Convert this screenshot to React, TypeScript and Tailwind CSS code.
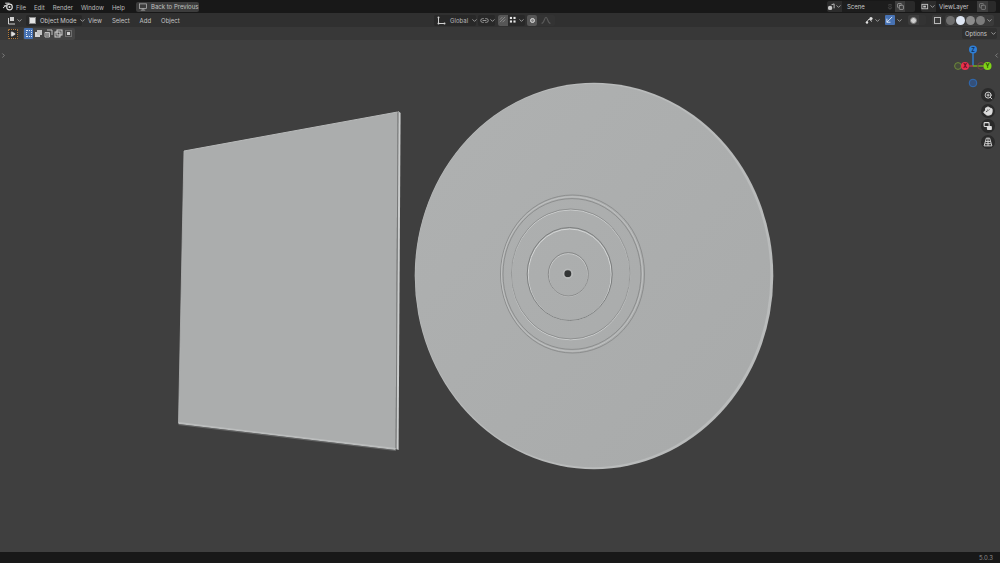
import { ChevronDown, ChevronLeft, ChevronRight, Hand, Link2, Copy, Pin, Play, ZoomIn } from "lucide-react";
import type { ReactNode } from "react";

const menus = ["File", "Edit", "Render", "Window", "Help"];
const editMenus = ["View", "Select", "Add", "Object"];

const BlenderLogo = () => (
  <svg width="12" height="11" viewBox="0 0 12 11" fill="none">
    <circle cx="7.5" cy="6" r="2.8" stroke="#dcdcdc" strokeWidth="1.2" />
    <circle cx="7.5" cy="6" r="1" fill="#dcdcdc" />
    <path d="M1 7 L5 3.6 M3.2 2.2 H7.5 M1.8 4.9 H4.8" stroke="#dcdcdc" strokeWidth="1" />
  </svg>
);

const Chevron = ({ color = "#bdbdbd" }: { color?: string }) => (
  <ChevronDown size={7} color={color} strokeWidth={2.5} className="shrink-0" />
);

const Glyph = ({ children, size = 9 }: { children: ReactNode; size?: number }) => (
  <svg width={size} height={size} viewBox="0 0 9 9" fill="none" className="shrink-0">
    {children}
  </svg>
);

const SelectModes = () => (
  <div className="flex items-center h-[12px] w-[52px] bg-[#454545] rounded-[2px] gap-[1px] ml-[5px] pl-[1px]">
    <div className="w-[9px] h-[11px] bg-[#4772b3] rounded-[1px] flex items-center justify-center">
      <div className="w-[6px] h-[7px] border border-dotted border-[#dfe8f5]" />
    </div>
    <Glyph>
      <rect x="1" y="3" width="5" height="5" fill="#d4d4d4" />
      <rect x="3" y="1" width="5" height="5" fill="#c4c4c4" />
    </Glyph>
    <Glyph>
      <path d="M3 1 H8 V6 M1 3.5 H5.5 V8 H1 Z" stroke="#cfcfcf" strokeWidth="0.9" />
      <rect x="1.5" y="4" width="3.5" height="3.5" fill="#8c8c8c" />
    </Glyph>
    <Glyph>
      <rect x="1" y="3" width="5" height="5" stroke="#d4d4d4" />
      <rect x="3" y="1" width="5" height="5" stroke="#d4d4d4" />
    </Glyph>
    <Glyph>
      <rect x="1.5" y="1.5" width="6" height="6" stroke="#9a9a9a" strokeDasharray="1 1" />
      <rect x="3" y="3" width="3" height="3" fill="#cfcfcf" />
    </Glyph>
  </div>
);

const NavButton = ({ children }: { children: ReactNode }) => (
  <div className="w-[14px] h-[14px] rounded-full bg-[#2a2a2a] flex items-center justify-center text-[#dcdcdc]">
    {children}
  </div>
);

const ShadeDot = ({ fill }: { fill: string }) => (
  <div className={`w-[9px] h-[9px] rounded-full ${fill}`} />
);

const Scene = () => (
  <svg className="absolute inset-0" width="1000" height="539" viewBox="0 13 1000 539">
    <defs>
      <linearGradient id="disc" x1="0" x2="1" y1="0" y2="1">
        <stop offset="0" stopColor="#afb1b1" />
        <stop offset="1" stopColor="#a8aaaa" />
      </linearGradient>
    </defs>

    {/* record sleeve */}
    <polygon points="398,111 400.6,113 398.6,450 396,449" fill="#c9cbcb" />
    <polygon points="397.6,111.5 398.6,112 396.6,449.6 395.6,449" fill="#767878" />
    <polygon points="184,151 397.6,112 395.6,449 178.5,423" fill="#abadad" />
    <polyline points="178.5,423 395.6,449" stroke="#bbbdbd" strokeWidth="1.8" fill="none" />
    <polyline points="178.5,424.6 396,450.6" stroke="#7e8080" strokeWidth="0.6" fill="none" />
    <polyline points="184,151 397.6,112" stroke="#b8baba" strokeWidth="1" fill="none" />
    <polyline points="184,151 178.5,423" stroke="#b2b4b4" strokeWidth="0.8" fill="none" />

    {/* vinyl */}
    <ellipse cx="594" cy="276" rx="179.3" ry="193.3" fill="#b9bbbb" />
    <ellipse cx="592.8" cy="275.6" rx="177.6" ry="191.6" fill="url(#disc)" />

    <g fill="none">
      <ellipse cx="572.5" cy="274" rx="72" ry="79" stroke="#7e8080" strokeWidth="0.7" />
      <ellipse cx="572" cy="274" rx="70.5" ry="77.2" stroke="#c8caca" strokeWidth="0.7" />
      <ellipse cx="572" cy="274" rx="69" ry="75.4" stroke="#7e8080" strokeWidth="0.7" />
      <ellipse cx="570.7" cy="274.8" rx="59.3" ry="65" stroke="#d4d6d6" strokeWidth="0.9" />
      <ellipse cx="570.7" cy="274" rx="59.3" ry="65" stroke="#7e8080" strokeWidth="0.7" />
      <ellipse cx="569.7" cy="274.8" rx="41.6" ry="45.8" stroke="#d4d6d6" strokeWidth="1" />
      <ellipse cx="569.7" cy="274" rx="42.5" ry="46.5" stroke="#767878" strokeWidth="0.9" />
      <ellipse cx="568.3" cy="275" rx="19.6" ry="21.4" stroke="#d0d2d2" strokeWidth="0.8" />
      <ellipse cx="568.3" cy="274.3" rx="20" ry="21.7" stroke="#7c7e7e" strokeWidth="0.8" />
    </g>
    <circle cx="567.8" cy="273.7" r="4.6" fill="none" stroke="#c0c2c2" strokeWidth="0.8" />
    <circle cx="567.8" cy="273.7" r="3.4" fill="#333535" />
  </svg>
);

const Gizmo = () => (
  <svg className="absolute left-[950px] top-[32px]" width="46" height="58" viewBox="0 0 46 58">
    <line x1="23" y1="21" x2="23" y2="8" stroke="#2f7fd6" strokeWidth="1.4" />
    <line x1="23" y1="21" x2="37" y2="21" stroke="#78b31a" strokeWidth="1.4" />
    <line x1="15" y1="21" x2="23" y2="21" stroke="#b53a4a" strokeWidth="1.4" />
    <circle cx="8" cy="21" r="3.4" fill="#464b3c" stroke="#6d8a3a" />
    <circle cx="31" cy="21" r="3.4" fill="none" stroke="#7a4048" />
    <circle cx="23" cy="38" r="3.8" fill="#34507a" stroke="#2f6bb5" />
    <circle cx="23" cy="4.5" r="4" fill="#2f7fd6" />
    <text x="23" y="6.5" fontSize="5.5" fontWeight="700" textAnchor="middle" fill="#123058" fontFamily="Inter, sans-serif">Z</text>
    <circle cx="15" cy="21" r="4" fill="#e8304f" />
    <text x="15" y="23" fontSize="5.5" fontWeight="700" textAnchor="middle" fill="#5a0a1c" fontFamily="Inter, sans-serif">X</text>
    <circle cx="37.5" cy="21" r="4" fill="#7fd417" />
    <text x="37.5" y="23" fontSize="5.5" fontWeight="700" textAnchor="middle" fill="#2c5204" fontFamily="Inter, sans-serif">Y</text>
  </svg>
);

export default function App() {
  return (
    <div className="w-[1000px] h-[563px] flex flex-col overflow-hidden bg-[#3f3f3f] text-[#c4c4c4] text-[6px] leading-[9px] whitespace-nowrap font-['Inter',sans-serif]">
      {/* top bar */}
      <div className="h-[13px] bg-[#181818] flex items-center shrink-0">
        <div className="w-[16px] pl-[2px] flex justify-start"><BlenderLogo /></div>
        <div className="flex gap-[8px] w-[120px] items-center pt-[1px]">
          {menus.map((m) => (
            <span key={m} className="text-[#bcbcbc]">{m}</span>
          ))}
        </div>
        <div className="h-[10px] w-[63px] bg-[#3c3c3c] rounded-[2px] flex items-center px-[3px] gap-[4px] text-[#c0c0c0]">
          <Glyph size={8}>
            <rect x="0.5" y="1" width="8" height="5" stroke="#c0c0c0" strokeWidth="0.8" />
            <path d="M2 8 H7 M4.5 6 V8" stroke="#c0c0c0" strokeWidth="0.8" />
          </Glyph>
          <span>Back to Previous</span>
        </div>
        <div className="ml-auto flex items-center gap-[6px] pr-[4px]">
          <div className="flex items-center bg-[#1d1d1d] rounded-[2px] h-[11px] w-[88px]">
            <div className="flex items-center justify-center w-[15px] bg-[#2c2c2c] rounded-l-[2px] h-full text-[#c8c8c8] shrink-0">
              <Glyph size={8}>
                <circle cx="3.5" cy="5.5" r="2.5" fill="#c8c8c8" />
                <path d="M5 2 L8 1 V6" stroke="#c8c8c8" />
              </Glyph>
              <Chevron />
            </div>
            <span className="w-[43px] pl-[5px] text-[#c8c8c8]">Scene</span>
            <Pin size={6} color="#5c5c5c" className="ml-[2px] shrink-0" />
            <div className="w-[10px] ml-[2px] h-full bg-[#3d3d3d] flex items-center justify-center shrink-0"><Copy size={7} color="#c4c4c4" /></div>
            <div className="flex-1 h-full bg-[#2a2a2a] rounded-r-[2px]" />
          </div>
          <div className="flex items-center bg-[#1d1d1d] rounded-[2px] h-[11px] w-[75px]">
            <div className="flex items-center justify-center w-[15px] bg-[#2c2c2c] rounded-l-[2px] h-full text-[#c8c8c8] shrink-0">
              <Glyph size={8}>
                <rect x="1" y="1.5" width="6.5" height="5" stroke="#c8c8c8" />
                <rect x="2.5" y="3" width="3" height="2" fill="#c8c8c8" />
              </Glyph>
              <Chevron />
            </div>
            <span className="w-[41px] pl-[3px] text-[#c8c8c8]">ViewLayer</span>
            <div className="w-[11px] h-full bg-[#3d3d3d] flex items-center justify-center shrink-0"><Copy size={7} color="#9a9a9a" /></div>
            <div className="flex-1 h-full bg-[#2a2a2a] rounded-r-[2px]" />
          </div>
        </div>
      </div>

      {/* viewport */}
      <div className="flex-1 relative">
        <Scene />

        <div className="relative flex items-center h-[14px] bg-[#303030] pl-[7px] pr-[6px]">
          <div className="flex items-center w-[16px] h-[11px] text-[#c8c8c8]">
            <Glyph>
              <path d="M1.5 8 H8 M1.5 8 V2" stroke="#cfcfcf" />
              <rect x="3" y="1" width="4" height="4" fill="#cfcfcf" />
            </Glyph>
            <Chevron />
          </div>
          <div className="ml-[3px] flex items-center gap-[3px] h-[11px] w-[56px] px-[2px] bg-[#282828] rounded-[2px] text-[#c8c8c8]">
            <Glyph>
              <rect x="1.5" y="1.5" width="6" height="6" fill="#e4e4e4" stroke="#8c8c8c" />
            </Glyph>
            <span className="flex-1">Object Mode</span>
            <Chevron />
          </div>
          <div className="ml-[6px] flex gap-[10px]">
            {editMenus.map((m) => <span key={m}>{m}</span>)}
          </div>
          <div className="absolute left-[434px] flex items-center h-[11px] text-[#b8b8b8]">
            <div className="flex items-center gap-[3px] w-[42px] bg-[#282828] rounded-[2px] h-full px-[3px]">
              <Glyph>
                <path d="M1.5 1.5 V7.5 H8" stroke="#cfcfcf" />
                <circle cx="1.5" cy="1.5" r="1" fill="#cfcfcf" />
                <circle cx="1.5" cy="7.5" r="1" fill="#cfcfcf" />
                <circle cx="7.5" cy="7.5" r="1" fill="#cfcfcf" />
              </Glyph>
              <span className="flex-1 pl-[1px]">Global</span>
              <Chevron />
            </div>
            <div className="flex items-center ml-[2px] w-[17px] bg-[#282828] rounded-[2px] h-full px-[2px]">
              <Link2 size={9} className="shrink-0" /><Chevron />
            </div>
            <div className="ml-[3px] flex items-center h-full bg-[#282828] rounded-[2px]">
              <div className="w-[10px] h-full bg-[#565656] rounded-l-[2px] flex items-center justify-center">
                <Glyph size={8}>
                  <path d="M1 7 L7 1 M1 4 L4 1 M4 7 L7 4" stroke="#8f8f8f" />
                </Glyph>
              </div>
              <div className="w-[10px] flex items-center justify-center">
                <Glyph size={8}>
                  <rect x="1" y="1" width="2.4" height="2.4" fill="#e6e6e6" />
                  <rect x="5" y="1" width="2.4" height="2.4" fill="#e6e6e6" />
                  <rect x="1" y="5" width="2.4" height="2.4" fill="#e6e6e6" />
                  <rect x="5" y="5" width="2.4" height="2.4" fill="#e6e6e6" />
                </Glyph>
              </div>
              <Chevron />
            </div>
            <div className="ml-[2px] w-[10px] h-full bg-[#565656] rounded-[2px] flex items-center justify-center">
              <div className="w-[5px] h-[5px] rounded-full border border-[#dcdcdc] bg-[#888888]" />
            </div>
            <div className="w-[18px] h-full bg-[#333333] rounded-r-[2px] flex items-center justify-center">
              <Glyph size={10}>
                <path d="M0.5 7.5 C3 7.5 3 2 4.5 2 C6 2 6 7.5 8.5 7.5" stroke="#5a5a5a" />
              </Glyph>
            </div>
          </div>
          <div className="ml-auto flex items-center h-[11px]">
            <div className="flex items-center text-[#d0d0d0]">
              <Glyph>
                <path d="M1 7 L4 3 L7 5.5" stroke="#d0d0d0" />
                <circle cx="6" cy="2.5" r="1.6" fill="#e0e0e0" />
                <circle cx="2" cy="6.5" r="1.2" fill="#e0e0e0" />
              </Glyph>
              <Chevron />
            </div>
            <div className="ml-[4px] w-[10px] h-[10px] bg-[#4772b3] rounded-[1px] flex items-center justify-center">
              <Glyph size={8}>
                <path d="M1 7 L7 1 M1 3 V7 H5" stroke="#e6eefa" />
              </Glyph>
            </div>
            <div className="ml-[1px]"><Chevron /></div>
            <div className="ml-[5px] w-[11px] h-[10px] bg-[#3c3c3c] rounded-l-[2px] flex items-center justify-center">
              <div className="w-[7px] h-[7px] rounded-full bg-[#cfcfcf] border border-[#7c7c7c]" />
            </div>
            <div className="w-[7px] h-[10px] bg-[#333333] rounded-r-[2px] mr-[6px]" />
            <div className="w-[10px] h-[10px] bg-[#3a3a3a] rounded-[2px] flex items-center justify-center mr-[3px]">
              <div className="w-[7px] h-[7px] border border-[#b8b8b8]" />
            </div>
            <div className="flex items-center gap-[1px] bg-[#3a3a3a] rounded-[2px] h-[11px] px-[1px]">
              <ShadeDot fill="bg-[#6e6e6e]" />
              <ShadeDot fill="bg-[#dfe7f4]" />
              <ShadeDot fill="bg-[#8c8c8c]" />
              <ShadeDot fill="bg-[#7c7c7c]" />
              <Chevron />
            </div>
          </div>
        </div>

        <div className="relative flex items-center h-[13px] bg-[#383838] pl-[8px]">
          <div className="w-[10px] h-[10px] border border-dotted border-[#b27a3a] bg-[#2b2b2b] rounded-[1px] flex items-center justify-center">
            <Play size={6} color="#e0e0e0" fill="#e0e0e0" />
          </div>
          <SelectModes />
          <div className="ml-auto mr-[3px] flex items-center gap-[3px] h-[11px] px-[3px] w-[35px] bg-[#303030] rounded-[2px] text-[#c8c8c8]">
            <span className="flex-1">Options</span>
            <Chevron />
          </div>
        </div>

        <div className="absolute left-0 top-[39px] text-[#a8a8a8]"><ChevronRight size={7} /></div>
        <div className="absolute right-0 top-[39px] text-[#a8a8a8]"><ChevronLeft size={7} /></div>

        <Gizmo />

        <div className="absolute left-[981px] top-[75px] flex flex-col gap-[1.6px]">
          <NavButton><ZoomIn size={9} strokeWidth={2.4} /></NavButton>
          <NavButton><Hand size={10} strokeWidth={2.2} fill="#dcdcdc" /></NavButton>
          <NavButton>
            <Glyph size={10}>
              <rect x="1" y="1.5" width="4.5" height="3.5" rx="0.8" stroke="#dcdcdc" />
              <rect x="3.5" y="4.5" width="4.5" height="3.5" rx="0.8" fill="#dcdcdc" />
            </Glyph>
          </NavButton>
          <NavButton>
            <Glyph size={10}>
              <path d="M3 1 H6 L8 8 H1 Z M2.2 4 H6.8 M4.5 1 V8 M2 6 H7" stroke="#dcdcdc" strokeWidth="0.8" />
            </Glyph>
          </NavButton>
        </div>
      </div>

      {/* status bar */}
      <div className="h-[11px] bg-[#181818] flex items-center justify-end pr-[7px] shrink-0 text-[#8c8c8c]">
        <span>5.0.3</span>
      </div>
    </div>
  );
}
